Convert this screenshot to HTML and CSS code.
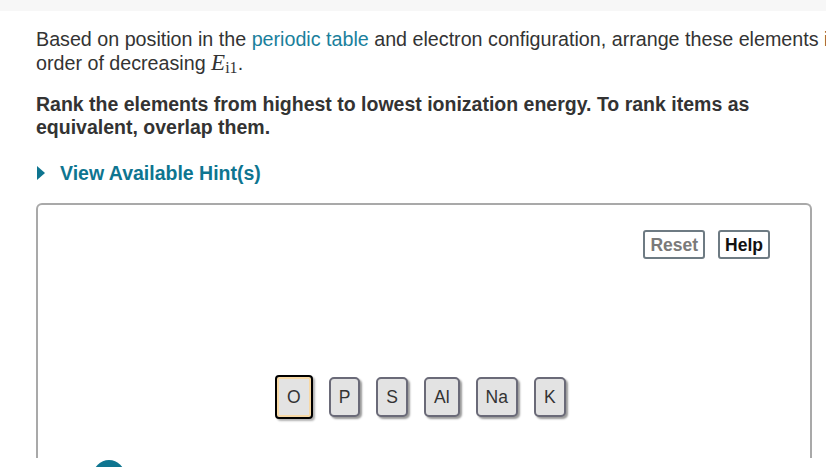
FILE: index.html
```html
<!DOCTYPE html>
<html>
<head>
<meta charset="utf-8">
<link rel="stylesheet" href="styles.css">
</head>
<body>
<div class="topband"></div>
<div class="content">
  <p class="intro">Based on position in the <a class="link" href="#">periodic table</a> and electron configuration, arrange these elements in order of decreasing <span class="math"><span class="mi">E</span><sub class="msub">i1</sub></span>.</p>
  <p class="instr">Rank the elements from highest to lowest ionization energy. To rank items as equivalent, overlap them.</p>
  <div class="hint"><span class="tri"></span><span class="hint-text">View Available Hint(s)</span></div>
  <div class="box">
    <div class="tools">
      <button class="btn reset">Reset</button>
      <button class="btn help">Help</button>
    </div>
    <div class="tiles">
      <div class="tile selected">O</div>
      <div class="tile">P</div>
      <div class="tile">S</div>
      <div class="tile">Al</div>
      <div class="tile">Na</div>
      <div class="tile">K</div>
    </div>
  </div>
  <div class="circle-row"><span class="circle"></span></div>
</div>
</body>
</html>
```
FILE: styles.css
```css
html, body {
  margin: 0;
  padding: 0;
  background: #ffffff;
  overflow: hidden;
}
body {
  width: 826px;
  height: 467px;
  font-family: "Liberation Sans", Arial, sans-serif;
  color: #333333;
  overflow: hidden;
}
.topband {
  height: 11px;
  background: #f7f7f7;
}
.content {
  padding: 0 0 0 36px;
}
.intro {
  margin: 17px 0 0 0;
  font-size: 19.7px;
  line-height: 23px;
  width: 808px;
  white-space: normal;
}
.link {
  color: #1a7f9c;
  text-decoration: none;
}
.math {
  font-family: "Liberation Serif", "Times New Roman", serif;
}
.mi {
  font-style: italic;
  font-size: 23px;
}
.msub {
  font-size: 16px;
  vertical-align: -3px;
  line-height: 0;
}
.instr {
  margin: 18px 0 0 0;
  font-size: 19.5px;
  line-height: 23px;
  font-weight: bold;
  width: 760px;
}
.hint {
  margin-top: 22px;
  display: flex;
  align-items: center;
  height: 24px;
}
.tri {
  width: 0;
  height: 0;
  border-top: 7px solid transparent;
  border-bottom: 7px solid transparent;
  border-left: 8px solid #0e7590;
  margin-left: 1px;
}
.hint-text {
  margin-left: 15px;
  font-size: 19.5px;
  font-weight: bold;
  color: #0e7590;
}
.box {
  margin-top: 18px;
  width: 776px;
  height: 255px;
  border: 2px solid #a9a9a9;
  border-bottom: none;
  border-radius: 6px 6px 0 0;
  box-sizing: border-box;
  display: flex;
  flex-direction: column;
}
.tools {
  display: flex;
  justify-content: flex-end;
  gap: 13px;
  padding: 25px 40px 0 0;
}
.btn {
  font-family: "Liberation Sans", Arial, sans-serif;
  font-size: 17.5px;
  font-weight: bold;
  background: #ffffff;
  border: 2px solid #6e7b83;
  border-radius: 3px;
  height: 29px;
  padding: 0 5px;
  line-height: 24px;
}
.reset {
  color: #7a7a7a;
}
.help {
  color: #111111;
}
.tiles {
  display: flex;
  gap: 16px;
  margin: 116px 0 0 237px;
  align-items: flex-start;
}
.tile {
  font-size: 17.5px;
  color: #333;
  background: #e3e3e3;
  border: 2px solid #6a6a78;
  border-radius: 5px;
  padding: 0 8px;
  height: 40px;
  line-height: 36px;
  box-sizing: border-box;
  box-shadow: 2px 2px 2px rgba(0, 0, 0, 0.4);
  margin-top: 2px;
}
.tile.selected {
  border: 2px solid #000000;
  box-shadow: inset 0 0 0 2px #f7d9a6, 2px 2px 2px rgba(0, 0, 0, 0.3);
  padding: 0 10px;
  height: 44px;
  line-height: 40px;
  margin-top: 0;
  border-radius: 4px;
}
.circle-row {
  height: 10px;
  padding-left: 57px;
  margin-top: 2px;
}
.circle {
  display: block;
  width: 32px;
  height: 32px;
  border-radius: 50%;
  background: #0e7590;
}
```
